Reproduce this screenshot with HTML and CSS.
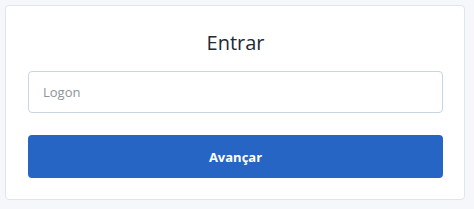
FILE: index.html
```html
<!DOCTYPE html>
<html lang="pt-BR">
<head>
    <meta charset="UTF-8">
    <meta name="viewport" content="width=device-width, initial-scale=1.0">
    <title>Entrar</title>
    <link rel="stylesheet" href="styles.css">
</head>
<body>

    <!-- Caixa de login -->
    <div class="login-card">
        <h1 class="login-title">Entrar</h1>
        <input class="login-input" type="text" placeholder="Logon">
        <button class="login-btn">Avançar</button>
    </div>

</body>
</html>
```

FILE: styles.css
```css
* {
    margin: 0;
    padding: 0;
    box-sizing: border-box;
}

body {
    font-family: "Open Sans", "Noto Sans", sans-serif;
    background-color: #f5f7fa;
    padding: 5px;
}

.login-card {
    width: 460px;
    height: 195px;
    background-color: #fff;
    border: 1px solid #dfe5ec;
    border-radius: 4px;
    padding: 23px 21px 21px 22px;
    display: flex;
    flex-direction: column;
}

.login-title {
    font-size: 20px;
    font-weight: 400;
    line-height: 27px;
    color: #222a33;
    text-align: center;
    margin-bottom: 15px;
}

.login-input {
    height: 42px;
    border: 1px solid #c8d5e4;
    border-radius: 4px;
    padding: 0 14px;
    font-family: inherit;
    font-size: 13px;
    color: #333;
    outline: none;
}

.login-input::placeholder {
    color: #8d9399;
}

.login-btn {
    margin-top: 22px;
    height: 43px;
    border: none;
    border-radius: 4px;
    background-color: #2765c4;
    color: #fff;
    font-family: inherit;
    font-size: 13px;
    font-weight: 700;
    cursor: pointer;
}

.login-btn:hover {
    background-color: #1f58ad;
}
```
